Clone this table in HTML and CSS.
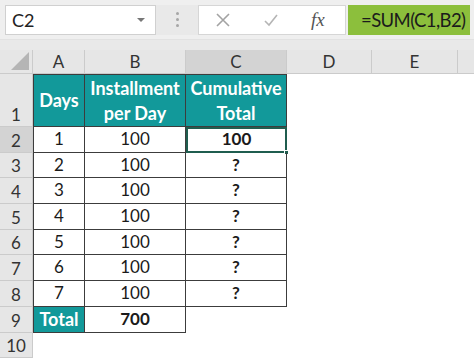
FILE: index.html
```html
<!DOCTYPE html>
<html lang="en">

<head>
    <meta charset="UTF-8">
    <title>Cumulative Total</title>
    <link rel="stylesheet" href="styles.css">
</head>

<body>
    <div class="formula-bar">
        <div class="name-box">
            <span>C2</span>
            <span class="caret"></span>
        </div>
        <div class="grip">
            <span></span><span></span><span></span>
        </div>
        <div class="formula-tools">
            <svg class="tool" width="16" height="16" viewBox="0 0 16 16">
                <path d="M2 2 L14 14 M14 2 L2 14" stroke="#a3a3a3" stroke-width="1.6" fill="none" />
            </svg>
            <svg class="tool" width="16" height="16" viewBox="0 0 16 16">
                <path d="M2 9 L6 13 L14 3" stroke="#b5b5b5" stroke-width="1.6" fill="none" />
            </svg>
            <span class="fx">fx</span>
        </div>
        <div class="formula-input">=SUM(C1,B2)</div>
    </div>

    <div class="sheet">
        <div class="hdr corner"><span class="tri"></span></div>
        <div class="hdr col">A</div>
        <div class="hdr col">B</div>
        <div class="hdr col active">C</div>
        <div class="hdr col">D</div>
        <div class="hdr col">E</div>
        <div class="hdr col last"></div>

        <div class="hdr row">1</div>
        <div class="cell teal top left">Days</div>
        <div class="cell teal top">Installment<br>per Day</div>
        <div class="cell teal top">Cumulative<br>Total</div>
        <div class="blank"></div><div class="blank"></div><div class="blank"></div>

        <div class="hdr row active">2</div>
        <div class="cell left">1</div>
        <div class="cell">100</div>
        <div class="cell bold selected">100<span class="handle"></span></div>
        <div class="blank"></div><div class="blank"></div><div class="blank"></div>

        <div class="hdr row">3</div>
        <div class="cell left">2</div>
        <div class="cell">100</div>
        <div class="cell bold">?</div>
        <div class="blank"></div><div class="blank"></div><div class="blank"></div>

        <div class="hdr row">4</div>
        <div class="cell left">3</div>
        <div class="cell">100</div>
        <div class="cell bold">?</div>
        <div class="blank"></div><div class="blank"></div><div class="blank"></div>

        <div class="hdr row">5</div>
        <div class="cell left">4</div>
        <div class="cell">100</div>
        <div class="cell bold">?</div>
        <div class="blank"></div><div class="blank"></div><div class="blank"></div>

        <div class="hdr row">6</div>
        <div class="cell left">5</div>
        <div class="cell">100</div>
        <div class="cell bold">?</div>
        <div class="blank"></div><div class="blank"></div><div class="blank"></div>

        <div class="hdr row">7</div>
        <div class="cell left">6</div>
        <div class="cell">100</div>
        <div class="cell bold">?</div>
        <div class="blank"></div><div class="blank"></div><div class="blank"></div>

        <div class="hdr row">8</div>
        <div class="cell left">7</div>
        <div class="cell">100</div>
        <div class="cell bold">?</div>
        <div class="blank"></div><div class="blank"></div><div class="blank"></div>

        <div class="hdr row">9</div>
        <div class="cell teal left">Total</div>
        <div class="cell bold">700</div>
        <div class="blank"></div><div class="blank"></div><div class="blank"></div><div class="blank"></div>

        <div class="hdr row">10</div>
        <div class="blank"></div><div class="blank"></div><div class="blank"></div>
        <div class="blank"></div><div class="blank"></div><div class="blank"></div>
    </div>
</body>

</html>
```

FILE: styles.css
```css
* {
    margin: 0;
    padding: 0;
    box-sizing: border-box;
}

body {
    font-family: 'Lato', 'Open Sans', sans-serif;
    background: #e9e9e9;
    width: 474px;
    height: 358px;
    overflow: hidden;
    color: #1a1a1a;
}

/* formula bar */
.formula-bar {
    display: flex;
    align-items: center;
    height: 40px;
    padding: 5px 0 5px 5px;
    background: #efefef;
    border-bottom: 1px solid #e2e2e2;
}

.name-box {
    width: 151px;
    height: 30px;
    background: #fff;
    border: 1px solid #d0d0d0;
    display: flex;
    align-items: center;
    justify-content: space-between;
    padding: 0 10px 0 6px;
    font-size: 18px;
    color: #222;
}

.caret {
    width: 0;
    height: 0;
    border-left: 4px solid transparent;
    border-right: 4px solid transparent;
    border-top: 4px solid #777;
}

.grip {
    width: 42px;
    height: 30px;
    display: flex;
    flex-direction: column;
    align-items: center;
    justify-content: center;
    gap: 3px;
    background: #e9e9e9;
}

.grip span {
    width: 3px;
    height: 3px;
    border-radius: 50%;
    background: #a6a6a6;
}

.formula-tools {
    width: 148px;
    height: 30px;
    background: #fff;
    border: 1px solid #d6d6d6;
    display: flex;
    align-items: center;
    padding-left: 16px;
    gap: 32px;
}

.fx {
    font-family: 'Liberation Serif', serif;
    font-style: italic;
    font-size: 19px;
    color: #555;
}

.formula-input {
    margin-left: 2px;
    width: 122px;
    height: 30px;
    background: #8cbf3c;
    font-size: 18.5px;
    letter-spacing: -0.6px;
    line-height: 30px;
    padding-left: 13px;
    color: #1b1b1b;
    white-space: nowrap;
}

/* sheet */
.sheet {
    margin-top: 10px;
    display: grid;
    grid-template-columns: 33px 52px 101px 101px 85px 86px 1fr;
    grid-template-rows: 24px 53px repeat(9, 25.7px);
    background: #fff;
    font-size: 17px;
}

.hdr {
    background: #e6e6e6;
    color: #333;
    border-right: 1px solid #cbcbcb;
    border-bottom: 1px solid #cbcbcb;
    display: flex;
    align-items: center;
    justify-content: center;
}

.hdr.active {
    background: #d3d3d3;
}

.hdr.row {
    align-items: flex-end;
    padding-bottom: 1px;
}

.hdr.last {
    border-right: none;
}

.corner {
    justify-content: flex-end;
    align-items: flex-end;
    padding: 0 3px 3px 0;
}

.tri {
    width: 0;
    height: 0;
    border-left: 18px solid transparent;
    border-bottom: 18px solid #b5b5b5;
}

.cell {
    position: relative;
    border-right: 1px solid #3c3c3c;
    border-bottom: 1px solid #3c3c3c;
    display: flex;
    align-items: center;
    justify-content: center;
    text-align: center;
    line-height: 1.35;
}

.cell.left {
    border-left: 1px solid #3c3c3c;
}

.cell.top {
    border-top: 1px solid #3c3c3c;
}

.cell.teal {
    background: #12999a;
    color: #fff;
    font-weight: 700;
    font-size: 18px;
}

.bold {
    font-weight: 700;
}

.selected {
    border: 2px solid #1f5d4f;
}

.handle {
    position: absolute;
    right: -4px;
    bottom: -4px;
    width: 5px;
    height: 5px;
    background: #1f5d4f;
    border: 1px solid #fff;
}
```
